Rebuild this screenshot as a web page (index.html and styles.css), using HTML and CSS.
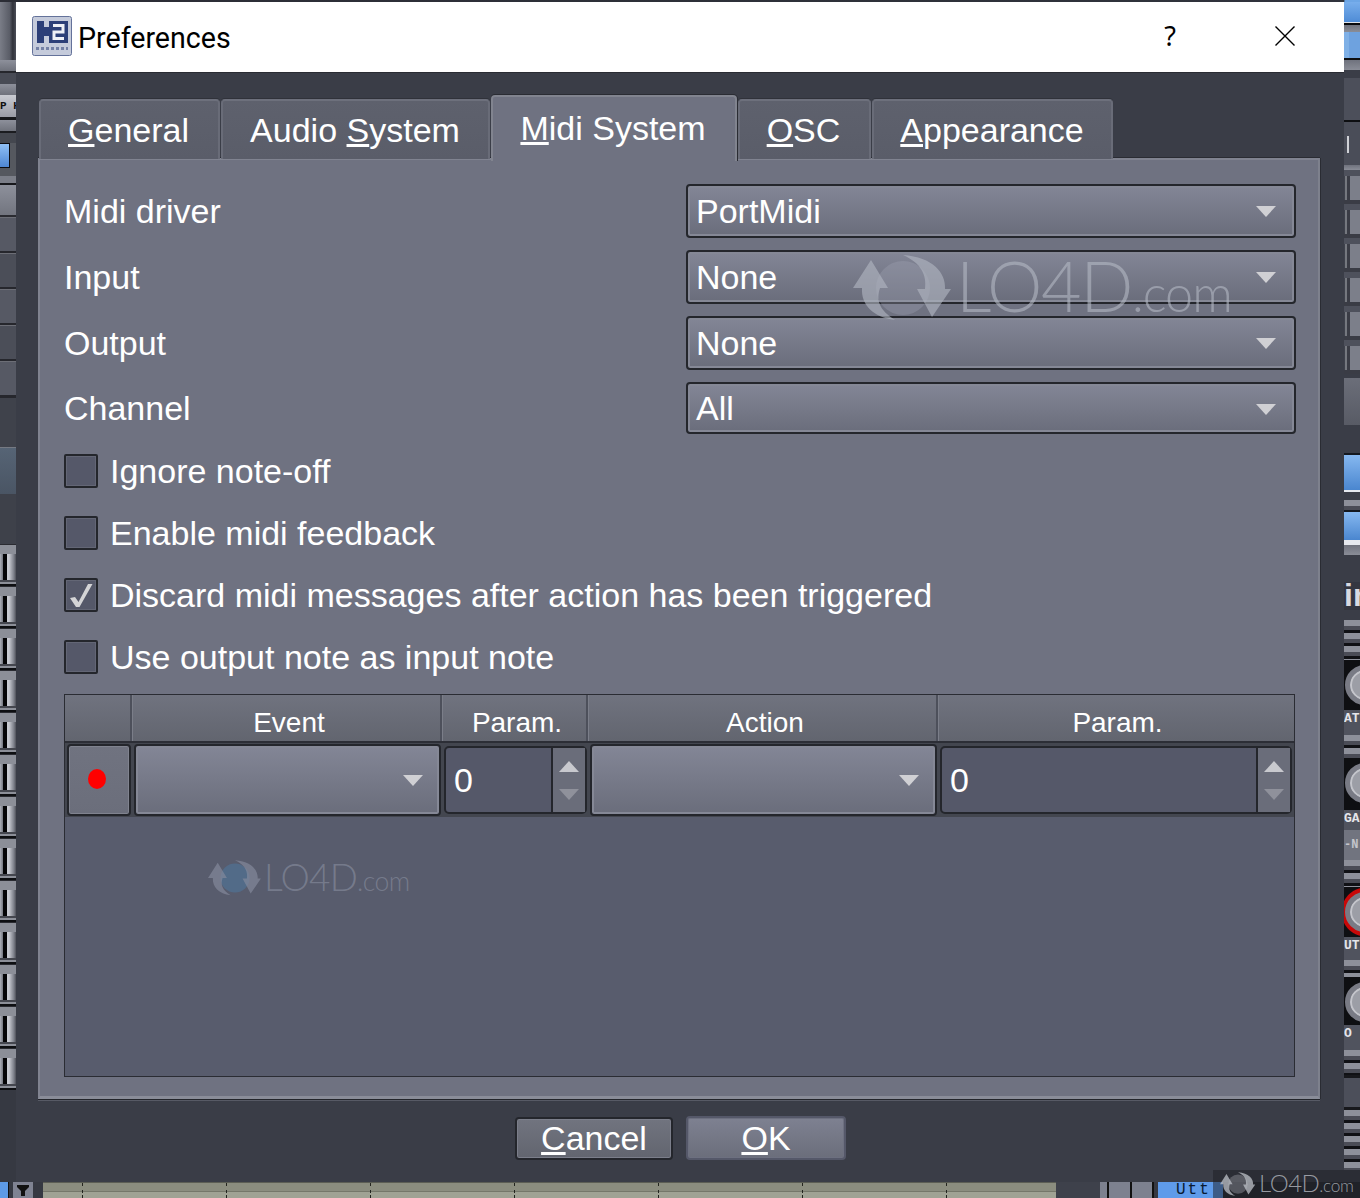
FILE: index.html
```html
<!DOCTYPE html>
<html lang="en">
<head>
<meta charset="utf-8">
<title>Preferences</title>
<link rel="stylesheet" href="styles.css">
</head>
<body>
<div class="desktop">
  <div class="strip-top"></div>
  <div class="middle">
    <div class="strip-left">
      <div class="l a1"></div>
      <div class="l a2"></div>
      <div class="l a2d"></div>
      <div class="l a2"></div>
      <div class="l a3"><span>P H</span></div>
      <div class="l a2"></div>
      <div class="l a2e"></div>
      <div class="l a4"><i></i></div>
      <div class="l a4b"></div>
      <div class="l a5"></div>
      <div class="l a6"></div><div class="l a6 alt"></div><div class="l a6"></div><div class="l a6 alt"></div><div class="l a6"></div>
      <div class="l a7"></div>
      <div class="l a8"></div>
      <div class="l a9"></div>
      <div class="faders">
        <b></b><b></b><b></b><b></b><b></b><b></b><b></b><b></b><b></b><b></b><b></b><b></b><b></b>
      </div>
      <div class="l a10"></div>
    </div>
    <div class="dialog">
      <div class="titlebar">
        <svg class="app-icon" viewBox="0 0 40 40">
          <rect x=".5" y=".5" width="39" height="39" rx="2" fill="#c5cbdb" stroke="#64729a"/>
          <rect x="5" y="5" width="31" height="22" fill="#2c3f78"/>
          <path d="M12 5h5v6h-5zM12 20h5v7h-5z" fill="#c5cbdb"/>
          <path d="M21 9.500h10v6.500h-9v6.500h10" fill="none" stroke="#eef0f6" stroke-width="3"/>
          <path d="M4 32.500h32" stroke="#7481a6" stroke-width="3" stroke-dasharray="3 2"/>
        </svg>
        <span class="title">Preferences</span>
        <span class="help">?</span>
        <svg class="close" viewBox="0 0 20 20"><path d="M.5.5l19 19M19.500.5l-19 19" stroke="#000" stroke-width="1.400" fill="none"/></svg>
      </div>
      <div class="content">
        <div class="tabs">
          <div class="tab t1"><u>G</u>eneral</div>
          <div class="tab t2">Audio <u>S</u>ystem</div>
          <div class="tab t3 active"><u>M</u>idi System</div>
          <div class="tab t4"><u>O</u>SC</div>
          <div class="tab t5"><u>A</u>ppearance</div>
        </div>
        <div class="pane">
          <div class="form">
            <label class="lbl">Midi driver</label>
            <div class="combo">PortMidi<i class="arrow"></i></div>
            <label class="lbl">Input</label>
            <div class="combo">None<i class="arrow"></i></div>
            <label class="lbl">Output</label>
            <div class="combo">None<i class="arrow"></i></div>
            <label class="lbl">Channel</label>
            <div class="combo short">All<i class="arrow"></i></div>
          </div>
          <div class="checks">
            <div class="check"><span class="box"></span>Ignore note-off</div>
            <div class="check"><span class="box"></span>Enable midi feedback</div>
            <div class="check"><span class="box"><svg viewBox="0 0 30 30"><path d="M4 18l5-1 3.500 5L22 4h4.500L13.500 27H10z" fill="#d4d4d6"/></svg></span>Discard midi messages after action has been triggered</div>
            <div class="check"><span class="box"></span>Use output note as input note</div>
          </div>
          <div class="table">
            <div class="thead">
              <div class="th c0"></div>
              <div class="th c1">Event</div>
              <div class="th c2">Param.</div>
              <div class="th c3">Action</div>
              <div class="th c4">Param.</div>
            </div>
            <div class="trow">
              <div class="cell c0"><div class="btn-rec"><i class="dot"></i></div></div>
              <div class="cell c1"><div class="cellcombo"><i class="arrow"></i></div></div>
              <div class="cell c2"><div class="spin"><span>0</span><div class="spinbtns"><i class="up"></i><i class="down"></i></div></div></div>
              <div class="cell c3"><div class="cellcombo"><i class="arrow"></i></div></div>
              <div class="cell c4"><div class="spin"><span>0</span><div class="spinbtns"><i class="up"></i><i class="down"></i></div></div></div>
            </div>
          </div>
        </div>
        <div class="buttons">
          <div class="button"><u>C</u>ancel</div>
          <div class="button focus"><u>O</u>K</div>
        </div>
      </div>
    </div>
    <div class="strip-right">
      <div class="r blue h20"></div>
      <div class="r blackline h3"></div>
      <div class="r gray h7"></div>
      <div class="r blue2 h26"></div>
      <div class="r black h2"></div>
      <div class="r gray h10"></div>
      <div class="r dark h8"></div>
      <div class="r panel h42"></div>
      <div class="r black h2"></div>
      <div class="r panel bar h43"></div>
      <div class="r gray h5"></div>
      <div class="r tile"></div><div class="r tile"></div><div class="r tile"></div><div class="r tile"></div><div class="r tile"></div><div class="r tile"></div>
      <div class="r dark h4"></div>
      <div class="r slate h47"></div>
      <div class="r dark h28"></div>
      <div class="r blue3 h37"></div>
      <div class="r white h2"></div>
      <div class="r dark h8"></div>
      <div class="r stripes h10"></div>
      <div class="r blue3 h30"></div>
      <div class="r white h5"></div>
      <div class="r gray h10"></div>
      <div class="r dark h27"></div>
      <div class="r letter">in</div>
      <div class="r dark h10"></div>
      <div class="r stripes h40"></div>
      <div class="r knob h50"><i></i></div>
      <div class="r cap h25">AT</div>
      <div class="r stripes h23"></div>
      <div class="r knob h52"><i></i></div>
      <div class="r cap h20">GA</div>
      <div class="r capn h30">-N</div>
      <div class="r stripes h27"></div>
      <div class="r knob red h50"><i></i></div>
      <div class="r cap h23">UT</div>
      <div class="r stripes h17"></div>
      <div class="r knob h48"><i></i></div>
      <div class="r cap h25">O</div>
      <div class="r stripes h25"></div>
      <div class="r boxed h35"></div>
      <div class="r stripes h60"></div>
      <div class="r dark h12"></div>
    </div>
  </div>
  <div class="strip-bottom">
    <div class="bb blue-end"></div>
    <div class="bb drop"><svg viewBox="0 0 20 16"><path d="M4 3h12v2l-4 4v5H8V9L4 5z" fill="#111"/></svg></div>
    <div class="bb timeline"></div>
    <div class="bb darkgap"></div>
    <div class="bb posts"></div>
    <div class="bb bluebar">Utt</div>
    <div class="bb rest"></div>
  </div>

  <div class="wm wm-input">
    <svg class="wm-logo" viewBox="0 0 100 68"><use href="#lo4d"/></svg>
    <span class="wm-text">LO4D<small>.com</small></span>
  </div>
  <div class="wm wm-table">
    <svg class="wm-logo" viewBox="0 0 100 68"><use href="#lo4d"/></svg>
    <span class="wm-text">LO4D<small>.com</small></span>
  </div>
  <div class="wm wm-corner">
    <svg class="wm-logo" viewBox="0 0 100 68"><use href="#lo4d"/></svg>
    <span class="wm-text">LO4D<small>.com</small></span>
  </div>
  <svg class="defs" width="0" height="0">
    <defs>
      <g id="lo4d">
        <circle class="wm-disc" cx="50" cy="33" r="27"/>
        <path d="M18 5L35 33H27C23 45 26 55 42 65C20 62 8 50 9 33H0z" fill="currentColor"/>
        <path d="M50 0C80 2 93 18 92 34H98L79 62L64 34H72C74 20 68 8 50 0z" fill="currentColor"/>
      </g>
    </defs>
  </svg>
</div>
</body>
</html>
```

FILE: styles.css
```css
* { box-sizing: border-box; }
html, body { margin: 0; padding: 0; }
body { width: 1360px; height: 1198px; overflow: hidden; background: #3a3d47; font-family: "Liberation Sans", Arial, sans-serif; color: #fff; }
.desktop { position: relative; width: 1360px; height: 1198px; display: flex; flex-direction: column; overflow: hidden; }
.strip-top { height: 2px; flex: none; background: linear-gradient(90deg, #2b2d35 0, #30333c 98.8%, #6da6e6 98.9%, #6da6e6 100%); }
.middle { flex: none; height: 1180px; display: flex; }

/* background application, left edge */
.strip-left { width: 16px; flex: none; display: flex; flex-direction: column; background: #3c3f49; overflow: hidden; }
.l { flex: none; width: 16px; }
.a1 { height: 58px; background: linear-gradient(90deg, #7a7d87 0, #5a5d67 60%, #30323a 80%, #4b4e58 100%); }
.a2 { height: 11px; background: linear-gradient(180deg, #8d909b, #6f727c); }
.a2d { height: 13px; background: #484b55; border-top: 2px solid #26272d; }
.a3 { height: 25px; background: linear-gradient(180deg, #c9cbd2, #9a9ca6); color: #111; font: bold 11px/22px "Liberation Mono", monospace; white-space: nowrap; overflow: hidden; border-bottom: 3px solid #17181c; }
.a2e { height: 12px; background: #44474f; border-top: 2px solid #1b1c20; }
.a4 { height: 25px; padding-right: 6px; background: #55585f; }
.a4 i { display: block; width: 10px; height: 25px; background: linear-gradient(180deg, #8fc0f6, #4e86d3); border: 1px solid #0c0c10; border-left: 0; }
.a4b { height: 17px; background: linear-gradient(180deg, #55585f 0 8px, #7b7e88 8px 15px, #17181c 15px); }
.a5 { height: 32px; background: linear-gradient(180deg, #8d909b, #72757f); border-bottom: 2px solid #2a2b31; }
.a6 { height: 36px; background: #565964; border-bottom: 2px solid #26272d; border-top: 1px solid #6c6e76; }
.a6.alt { background: #4b4e58; }
.a7 { height: 50px; background: #3f424b; border-top: 1px solid #26272d; }
.a8 { height: 47px; background: linear-gradient(180deg, #566475, #4a5564); border-top: 1px solid #767a83; }
.a9 { height: 50px; background: #3e414a; }
.faders { flex: none; display: flex; flex-direction: column; }
.faders b { display: block; flex: none; width: 16px; height: 42px; background:
    linear-gradient(180deg, #2a2b31 0 1px, #8c8f98 1px 10px, transparent 10px 36px, #44464e 36px 38px, #8c8f98 38px 40px, #0e0f12 40px 42px),
    linear-gradient(90deg, #aeb1ba 0, #73767f 3px, #050507 3px 7px, #c8cad1 7px 9px, #7a7d87 14px, #4f5159 16px); }
.a10 { flex: 1; background: #363942; }

/* background application, right edge */
.strip-right { width: 16px; flex: none; display: flex; flex-direction: column; background: #3e414b; overflow: hidden; }
.r { flex: none; width: 16px; }
.h2 { height: 2px; } .h3 { height: 3px; } .h4 { height: 4px; } .h5 { height: 5px; } .h7 { height: 7px; } .h8 { height: 8px; }
.h10 { height: 10px; } .h12 { height: 12px; } .h17 { height: 17px; } .h20 { height: 20px; } .h23 { height: 23px; } .h25 { height: 25px; }
.h26 { height: 26px; } .h27 { height: 27px; } .h28 { height: 28px; } .h30 { height: 30px; } .h35 { height: 35px; } .h37 { height: 37px; }
.h40 { height: 40px; } .h42 { height: 42px; } .h43 { height: 43px; } .h47 { height: 47px; } .h48 { height: 48px; } .h50 { height: 50px; }
.h52 { height: 52px; } .h60 { height: 60px; }
.blue { background: linear-gradient(180deg, #78aeec, #4f8cd6); }
.blackline { background: linear-gradient(180deg, #dfe3ea 0 1px, #08090c 1px); }
.gray { background: linear-gradient(180deg, #6f727d, #8a8d97); }
.blue2 { background: linear-gradient(180deg, #6ea2df, #6ea2df); border-left: 5px solid #7fb0e6; }
.black { background: #0d0e11; }
.dark { background: #3a3d47; }
.panel { background: #4c4f5a; }
.panel.bar { background: linear-gradient(90deg, #4a4d58 0 3px, #cfd1d6 3px 5px, #4a4d58 5px) 0 14px / 100% 17px no-repeat, #4a4d58; }
.tile { height: 34px; background:
    linear-gradient(180deg, #4e515c 0 6px, transparent 6px 30px, #3a3c45 30px),
    linear-gradient(90deg, #3f424c 0 1px, #75787f 1px 3px, #3a3c45 3px 6px, #7c7f8a 6px); }
.slate { background: linear-gradient(180deg, #6b6e79, #585b65); }
.blue3 { background: linear-gradient(180deg, #14181f 0 2px, #86b8f0 2px, #4a86cf); }
.white { background: #e6e9ef; }
.stripes { background: repeating-linear-gradient(180deg, #8d909a 0 6px, #4a4c56 6px 10px, #101115 10px 13px); }
.letter { height: 28px; font: bold 32px/27px "Liberation Sans", sans-serif; color: #d8dae0; background: #343640; overflow: hidden; white-space: nowrap; }
.knob { padding-top: 5px; background: #0e0f12; overflow: hidden; }
.knob i { display: block; width: 40px; height: 40px; margin-left: 1px; border-radius: 50%; background: #9c9ea6; border: 5px solid #797b85; box-shadow: inset 0 0 0 2px #c4c5cb; }
.knob.red { background: radial-gradient(circle at 22px 25px, #c90808 0 24px, #0e0f12 25px); }
.cap { font: bold 13px/18px "Liberation Mono", monospace; color: #e4e5ea; white-space: nowrap; overflow: hidden; background: #50535e; }
.capn { font: bold 12px/30px "Liberation Mono", monospace; color: #c4c5cb; background: #71747f; overflow: hidden; white-space: nowrap; }
.boxed { background: #4c4f5a; border: 3px solid #17181c; border-left: 0; border-right-width: 0; }

/* dialog */
.dialog { flex: none; width: 1328px; display: flex; flex-direction: column; background: #3a3d47; }
.titlebar { flex: none; height: 71px; background: #fff; color: #000; display: flex; align-items: center; padding: 0 49px 0 16px; border-bottom: 1px solid #2a2c33; }
.app-icon { width: 40px; height: 40px; flex: none; margin-top: -2px; }
.title { font: 28.600px Roboto, "Noto Sans", sans-serif; margin-left: 6px; flex: 1; padding-top: 1px; }
.help { font: 27px "Noto Sans", sans-serif; margin-right: 99px; margin-top: -3px; }
.close { width: 20px; height: 20px; flex: none; margin-top: -2px; }
.content { flex: 1; display: flex; flex-direction: column; padding: 22px 24px 0 22px; }

.tabs { flex: none; height: 64px; display: flex; align-items: flex-end; padding-left: 1px; gap: 1px; position: relative; z-index: 1; margin-bottom: -1px; }
.tab { height: 60px; font-size: 34px; line-height: 58px; text-align: center; background: linear-gradient(180deg, #5e616d, #5a5d69); border: 2px solid #696c78; border-bottom: 0; border-top-color: #6d707c; border-radius: 4px 4px 0 0; color: #fff; box-shadow: 0 -1px 0 #30323a; }
.t1 { width: 181px; padding-right: 2px; }
.t2 { width: 269px; padding-right: 1px; }
.t3 { width: 246px; padding-right: 2px; }
.t4 { width: 133px; padding-right: 2px; }
.t5 { width: 241px; padding-right: 1px; }
.tab.active { height: 66px; margin-bottom: -2px; line-height: 62px; background: #6f7281; border-color: #81848f; box-shadow: 0 -1px 0 #2a2c33, 1px 0 0 #2a2c33; position: relative; z-index: 2; }

.pane { flex: none; width: 1282px; height: 941px; background: #6f7281; border: 2px solid #808390; border-right-color: #7e818d; border-bottom: 3px solid #8a8d99; box-shadow: 0 -1px 0 #2a2c33, 1px 0 0 #2a2c33, 0 1px 0 #23252b, 0 2px 0 #575a65; padding: 24px 23px 0 24px; display: flex; flex-direction: column; }

.form { display: grid; grid-template-columns: 622px 610px; grid-template-rows: 54px 54px 54px 52px; row-gap: 12px; align-items: center; }
.lbl { font-size: 34px; }
.combo { position: relative; height: 54px; font-size: 34px; line-height: 50px; padding-left: 8px; border: 2px solid #24262c; border-radius: 4px; background: linear-gradient(180deg, #838696 0, #6a6d7b 100%); box-shadow: inset 0 0 0 2px #858896; }
.combo.short { height: 52px; line-height: 48px; }
.arrow { position: absolute; right: 18px; top: 20px; width: 0; height: 0; border-left: 10px solid transparent; border-right: 10px solid transparent; border-top: 11px solid #d0d0d4; }

.checks { display: flex; flex-direction: column; gap: 28px; margin-top: 20px; }
.check { display: flex; align-items: center; height: 34px; font-size: 34px; white-space: nowrap; }
.box { flex: none; width: 34px; height: 34px; margin-right: 12px; background: #555869; border: 2px solid #24262c; border-radius: 2px; box-shadow: inset 0 0 0 1px #636675; }
.box svg { display: block; width: 30px; height: 30px; }

.table { flex: 1; margin: 20px 0 19px 0; background: #585c6d; border: 1px solid #2a2c33; }
.thead { height: 48px; display: flex; background: linear-gradient(180deg, #70737f, #62656f); border-bottom: 2px solid #2c2e36; }
.th { height: 46px; font-size: 28px; line-height: 56px; text-align: center; padding-left: 6px; border-right: 2px solid #4d505b; box-shadow: 1px 0 0 #7b7e89; }
.th.c4 { border-right: 0; box-shadow: none; padding-left: 3px; }
.c0 { width: 67px; flex: none; }
.c1 { width: 310px; flex: none; }
.c2 { width: 146px; flex: none; }
.c3 { width: 350px; flex: none; }
.c4 { flex: 1; }
.trow { height: 74px; display: flex; border-bottom: 1px solid #43464f; background: #43464f; padding-top: 1px; }
.cell { height: 72px; padding: 0 1px 0 2px; }
.cell.c4 { padding-right: 2px; }
.btn-rec { position: relative; height: 72px; border: 2px solid #24262c; border-radius: 4px; background: linear-gradient(180deg, #707380, #6b6e7b); box-shadow: inset 0 0 0 1px #80838f; }
.dot { position: absolute; left: 19px; top: 23px; width: 18px; height: 20px; border-radius: 50%; background: #f00; }
.cellcombo { position: relative; height: 72px; border: 2px solid #24262c; border-radius: 4px; background: linear-gradient(180deg, #838696, #6a6d7b); box-shadow: inset 0 0 0 2px #858896; }
.cellcombo .arrow { top: 29px; right: 16px; }
.spin { height: 68px; margin-top: 2px; display: flex; border: 2px solid #24262c; border-radius: 5px; background: #555869; font-size: 34px; line-height: 64px; }
.spin span { flex: 1; padding-left: 8px; }
.spinbtns { flex: none; width: 34px; display: flex; flex-direction: column; align-items: center; gap: 17px; padding-top: 13px; border-left: 2px solid #24262c; background: #6a6d7a; }
.up { width: 0; height: 0; border-left: 10px solid transparent; border-right: 10px solid transparent; border-bottom: 11px solid #c8c9ce; }
.down { width: 0; height: 0; border-left: 10px solid transparent; border-right: 10px solid transparent; border-top: 11px solid #8f919b; }

.buttons { flex: none; display: flex; justify-content: center; gap: 13px; padding-top: 18px; margin-left: 3px; }
.button { width: 158px; height: 43px; font-size: 34px; line-height: 39px; text-align: center; border: 2px solid #24262c; border-radius: 4px; background: linear-gradient(180deg, #71747f, #62656f); box-shadow: inset 0 0 0 1px #7b7e8a; }
.button.focus { width: 160px; margin-top: -1px; height: 44px; line-height: 41px; background: linear-gradient(180deg, #7e8191, #6b6e7b); border-color: #555869; box-shadow: inset 0 0 0 1px #6d7080; }

/* background application, bottom edge */
.strip-bottom { flex: none; height: 16px; display: flex; background: #363942; }
.bb { flex: none; height: 16px; }
.blue-end { width: 9px; background: #5d9ae6; border-right: 1px solid #111; }
.drop { width: 20px; margin-left: 4px; background: #7f8392; }
.drop svg { display: block; width: 20px; height: 16px; }
.timeline { width: 1013px; margin-left: 10px; background:
   linear-gradient(180deg, #5c5e55 0 1px, transparent 1px 4px, #8b8d7f 4px 8px, transparent 8px 11px, #a0a294 11px 13px, transparent 13px),
   repeating-linear-gradient(90deg, transparent 0 39px, #23241f 39px 40px, transparent 40px 144px),
   linear-gradient(180deg, #8b8d7f 0 9px, #75776a 9px 10px, #a0a294 10px); }
.darkgap { width: 44px; background: #3e414b; }
.posts { width: 58px; background: linear-gradient(90deg, #7d818f 0 7px, #111 7px 9px, #7d818f 9px 30px, #111 30px 32px, #7d818f 32px 52px, #111 52px 54px, #363841 54px); }
.bluebar { width: 65px; background: #5f9bea; color: #0a1a33; font: 16px/16px "Liberation Mono", monospace; letter-spacing: 2px; padding-left: 18px; overflow: hidden; }
.rest { flex: 1; background: #24262d; }

/* LO4D watermark */
.defs { position: absolute; }
.wm { position: absolute; display: flex; align-items: center; pointer-events: none; white-space: nowrap; }
.wm-logo { flex: none; display: block; }
.wm-disc { fill: var(--disc); }
.wm-text { font-family: Lato, Roboto, sans-serif; font-weight: 300; letter-spacing: -.02em; }
.wm-text small { font-size: .72em; letter-spacing: -.02em; }
.wm-input { --disc: rgba(165, 170, 185, .3); left: 853px; top: 255px; height: 68px; color: rgba(178, 182, 194, .62); gap: 3px; }
.wm-input .wm-logo { width: 100px; height: 68px; }
.wm-input .wm-text { font-size: 70px; line-height: 72px; }
.wm-table { --disc: rgba(82, 108, 138, .95); left: 208px; top: 860px; height: 37px; color: rgba(135, 140, 158, .65); gap: 2px; }
.wm-table .wm-logo { width: 54px; height: 37px; }
.wm-table .wm-text { font-size: 37px; line-height: 41px; }
.wm-corner { --disc: rgba(120, 122, 130, .6); left: 1213px; top: 1170px; width: 147px; height: 28px; padding-left: 7px; gap: 3px; color: rgba(190, 193, 200, .75); background: rgba(28, 29, 35, .5); }
.wm-corner .wm-logo { width: 36px; height: 25px; }
.wm-corner .wm-text { font-size: 24px; line-height: 28px; }
```
